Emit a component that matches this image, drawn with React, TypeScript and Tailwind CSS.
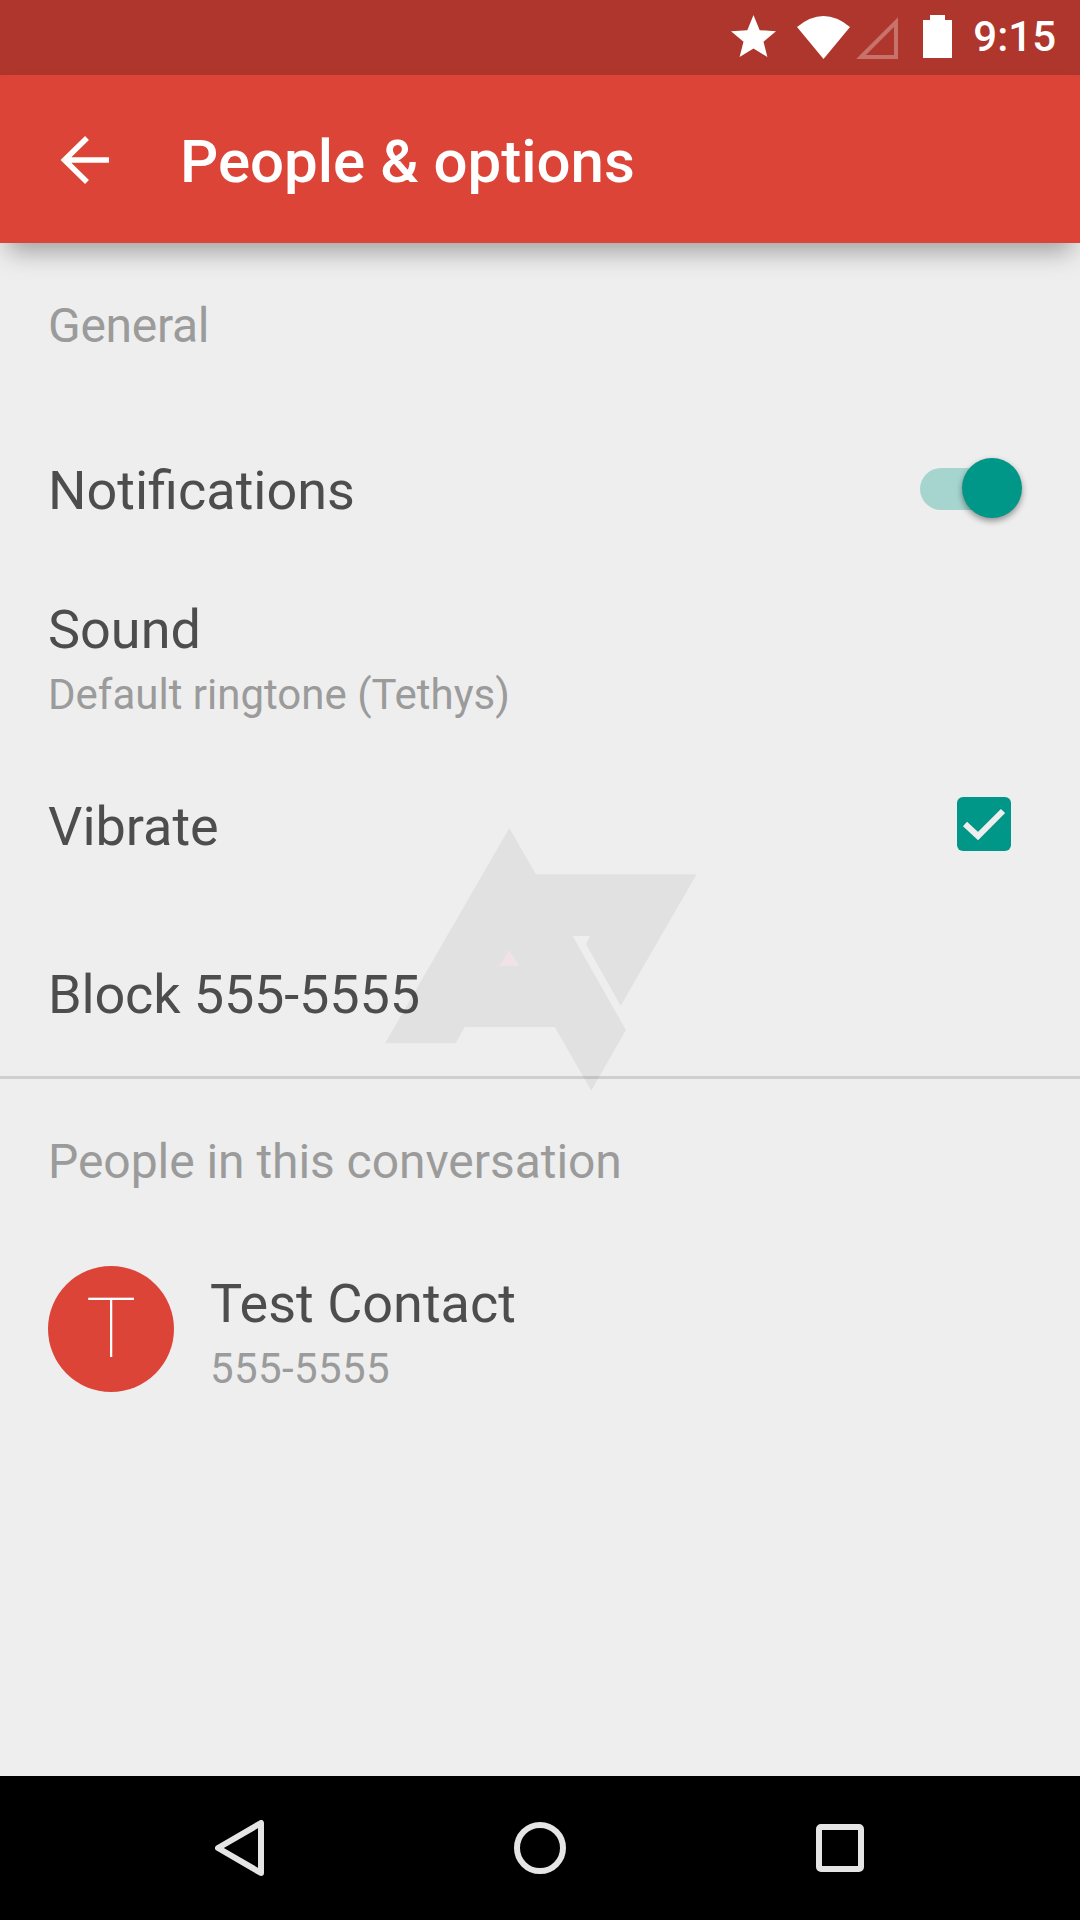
const font = { fontFamily: '"Roboto", "Liberation Sans", sans-serif' };

function StatusBar() {
  return (
    <div className="flex h-[75px] shrink-0 items-start justify-end bg-[#af362c] pr-[24px] pt-[15px]">
      <svg className="h-[42px] w-[45px]" viewBox="0 0 45 42">
        <path fill="#fff" d="M22.5 0 L28.7 15.2 L45 16.3 L32.5 26.8 L36.4 42 L22.5 33.4 L8.6 42 L12.5 26.8 L0 16.3 L16.3 15.2 Z" />
      </svg>
      <svg className="ml-[21px] mt-px h-[43px] w-[53px]" viewBox="0 0 53 43">
        <path fill="#fff" d="M0 11 Q26.5 -11 53 11 L26.5 43 Z" />
      </svg>
      <svg className="ml-[6px] mt-[2px] h-[42px] w-[42px]" viewBox="0 0 42 42">
        <path fill="none" stroke="#fff" strokeOpacity="0.3" strokeWidth="4" d="M5 40 L40 5 V40 Z" />
      </svg>
      <svg className="ml-[25px] h-[43px] w-[29px]" viewBox="0 0 29 43">
        <path fill="#fff" d="M7 0 H22 V5 H29 V43 H0 V5 H7 Z" />
      </svg>
      <span className="ml-[21px] text-[42px] font-medium leading-[44px] text-white">9:15</span>
    </div>
  );
}

function AppBar() {
  return (
    <div className="relative z-10 flex h-[168px] shrink-0 items-center bg-[#dc4438] pl-[60px] shadow-[0_16px_24px_-8px_rgba(0,0,0,0.34)]">
      <svg className="mt-[2px] h-[48px] w-[49px]" viewBox="0 0 49 48">
        <path fill="none" stroke="#fff" strokeWidth="5.5" d="M49 24 H5 M27 2 L4.5 24 L27 46" />
      </svg>
      <h1 className="ml-[71px] mt-[5px] text-[60px] font-medium leading-none text-white">People &amp; options</h1>
    </div>
  );
}

function SectionLabel({ children, className }: { children: string; className: string }) {
  return (
    <div className={`flex items-center px-[48px] text-[48px] text-[#9b9b9b] ${className}`}>{children}</div>
  );
}

function Row({ children, className }: { children: React.ReactNode; className: string }) {
  return (
    <div className={`flex items-center justify-between pl-[48px] text-[54px] text-[#4d4d4d] ${className}`}>
      {children}
    </div>
  );
}

function Toggle() {
  return (
    <div className="relative mr-[58px] -mt-[7px] h-[60px] w-[102px]">
      <div className="absolute left-0 top-[10px] h-[42px] w-[90px] rounded-full bg-[#a6d5d0]" />
      <div className="absolute right-0 top-0 h-[60px] w-[60px] rounded-full bg-[#009688] shadow-[0_3px_6px_rgba(0,0,0,0.4)]" />
    </div>
  );
}

function Checkbox() {
  return (
    <div className="mr-[69px] h-[54px] w-[54px] rounded-[6px] bg-[#009688]">
      <svg className="h-[54px] w-[54px]" viewBox="0 0 54 54">
        <path fill="none" stroke="#eeeeee" strokeWidth="6" d="M8 27 L21 39 L46 14" />
      </svg>
    </div>
  );
}

function Watermark() {
  return (
    <svg className="pointer-events-none absolute left-0 top-0 h-[1920px] w-[1080px]" viewBox="0 0 1080 1920">
      <path
        fill="#000"
        fillOpacity="0.05"
        d="M509.3 828 L536 874.3 H696.7 L620.7 1005.7 L586 944.3 L590 936 H572.7 L626 1030 L591.3 1090.7 L554.7 1027 H464.7 L455.7 1043.3 H385 Z"
      />
      <path fill="#f0e2e5" d="M509.3 950 L519.3 966 H499.3 Z" />
    </svg>
  );
}

function NavBar() {
  return (
    <div className="flex h-[144px] shrink-0 items-center bg-black pl-[215px]">
      <svg className="h-[56px] w-[49px]" viewBox="0 0 49 56">
        <path fill="none" stroke="#e5e5e5" strokeWidth="6" strokeLinejoin="round" d="M46 3 V53 L3 28 Z" />
      </svg>
      <svg className="ml-[250px] h-[52px] w-[52px]" viewBox="0 0 52 52">
        <circle cx="26" cy="26" r="23" fill="none" stroke="#e5e5e5" strokeWidth="6" />
      </svg>
      <svg className="ml-[250px] h-[48px] w-[48px]" viewBox="0 0 48 48">
        <rect x="3" y="3" width="42" height="42" rx="2" fill="none" stroke="#e5e5e5" strokeWidth="6" />
      </svg>
    </div>
  );
}

export default function App() {
  return (
    <div className="relative flex h-[1920px] w-[1080px] flex-col overflow-hidden bg-[#eeeeee]" style={font}>
      <StatusBar />
      <AppBar />
      <div className="flex-1">
        <SectionLabel className="h-[166px] tracking-[-0.3px]">General</SectionLabel>
        <Row className="h-[164px]">
          <span className="-mt-[2px]">Notifications</span>
          <Toggle />
        </Row>
        <Row className="h-[174px]">
          <div>
            <div className="leading-[70px]">Sound</div>
            <div className="text-[42px] leading-[60px] text-[#9b9b9b]">Default ringtone (Tethys)</div>
          </div>
        </Row>
        <Row className="h-[158px]">
          <span>Vibrate</span>
          <div className="-mt-[4px]">
            <Checkbox />
          </div>
        </Row>
        <Row className="h-[171px]">
          <span className="mt-[7px] tracking-[-0.15px]">Block 555-5555</span>
        </Row>
        <div className="h-[3px] bg-[#cfcfcf]" />
        <SectionLabel className="h-[166px] tracking-[-0.05px]">People in this conversation</SectionLabel>
        <div className="-mt-[2px] flex h-[172px] items-center pl-[48px]">
          <div className="flex h-[126px] w-[126px] items-center justify-center rounded-full bg-[#dc4438] text-[84px] font-thin leading-none text-white">
            T
          </div>
          <div className="ml-[36px] mt-[10px]">
            <div className="text-[54px] leading-[70px] text-[#4d4d4d]">Test Contact</div>
            <div className="text-[42px] leading-[60px] tracking-[0.4px] text-[#9b9b9b]">555-5555</div>
          </div>
        </div>
      </div>
      <NavBar />
      <Watermark />
    </div>
  );
}
